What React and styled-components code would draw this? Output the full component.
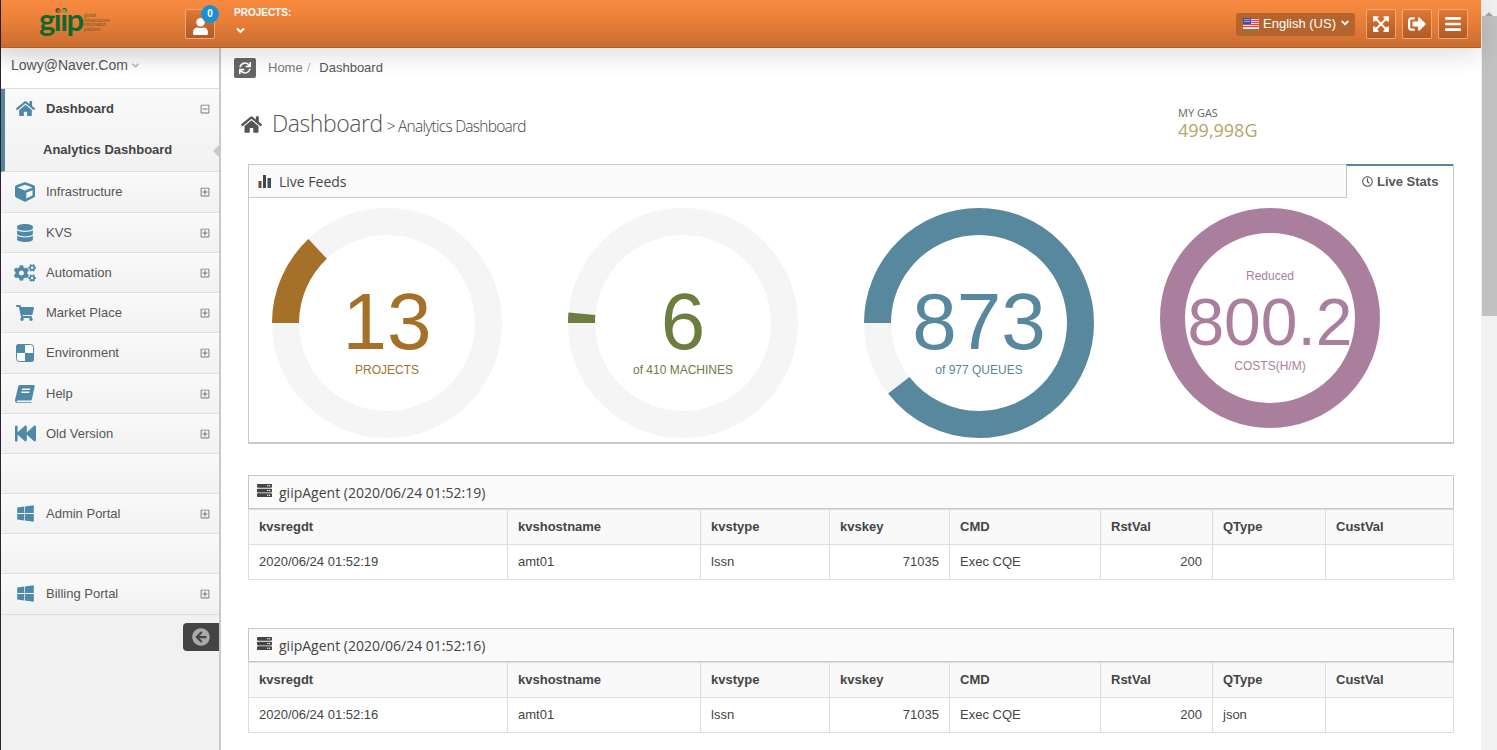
import React from 'react';
import styled, { createGlobalStyle } from 'styled-components';
import {
  FaHome, FaCube, FaDatabase, FaCogs, FaShoppingCart, FaFastBackward, FaWindows, FaUser,
  FaAngleDown, FaExpandArrowsAlt, FaSignOutAlt, FaBars, FaSync, FaRegClock, FaServer,
  FaArrowCircleLeft, FaRegPlusSquare, FaRegMinusSquare,
} from 'react-icons/fa';

const GlobalStyle = createGlobalStyle`
  html, body { margin: 0; padding: 0; height: 100%; overflow: hidden; background: #fff; }
  body { font-family: "Liberation Sans", Arial, sans-serif; font-size: 13px; color: #444; }
  * { box-sizing: border-box; }
`;

const Page = styled.div`
  display: flex;
  width: 1497px;
  height: 750px;
  overflow: hidden;
`;

const Viewport = styled.div`
  width: 1481px;
  display: flex;
  flex-direction: column;
  border-left: 1px solid #2e1f33;
  position: relative;
`;

// ---- scrollbar
const ScrollBar = styled.div`
  width: 16px;
  background: #f1f1f1;
  display: flex;
  flex-direction: column;
  align-items: center;
`;
const ScrollArrow = styled.div`
  margin-top: 6px;
  height: 10px;
  border-left: 4px solid transparent;
  border-right: 4px solid transparent;
  border-bottom: 4px solid #a3a3a3;
  width: 8px;
`;
const ScrollThumb = styled.div`
  width: 15px;
  margin-left: 1px;
  height: 300px;
  background: #c1c1c1;
`;

// ---- header
const Header = styled.header`
  height: 48px;
  flex: none;
  display: flex;
  align-items: flex-start;
  background: linear-gradient(to bottom, #f98b41 0%, #e97f39 45%, #c96c2f 100%);
  border-bottom: 1px solid #b45f28;
  box-shadow: 0 8px 24px rgba(0, 0, 0, 0.12);
  position: relative;
  z-index: 2;
`;
const Logo = styled.div`
  width: 184px;
  height: 47px;
  padding: 4px 0 0 38px;
  display: flex;
  gap: 1px;
  position: relative;
`;
const LogoMark = styled.span`
  font-family: "Lato", sans-serif;
  font-size: 31px;
  line-height: 31px;
  font-weight: 700;
  letter-spacing: -1.5px;
  color: #12672f;
`;
const LogoSub = styled.span`
  font-size: 4.5px;
  line-height: 4.5px;
  padding-top: 10px;
  width: 28px;
  color: #6b5a22;
`;
const LogoDot = styled.i`
  position: absolute;
  top: 9px;
  left: ${p => p.$x}px;
  width: 4px;
  height: 4px;
  border-radius: 50%;
  background: ${p => p.$c};
`;
const IconBox = styled.div`
  width: 30px;
  height: 30px;
  margin-top: 9px;
  border: 1px solid rgba(255, 190, 140, 0.75);
  border-radius: 2px;
  background: linear-gradient(to bottom, rgba(190, 95, 40, 0.35), rgba(165, 85, 35, 0.75));
  color: #fff;
  font-size: 18px;
  display: flex;
  align-items: center;
  justify-content: center;
  position: relative;
`;
const UserButton = styled(IconBox)`
  font-size: 17px;
  padding-top: 4px;
`;
const Badge = styled.span`
  position: absolute;
  top: -5px;
  right: -5px;
  width: 18px;
  height: 18px;
  border-radius: 50%;
  background: #1a8fd6;
  color: #fff;
  font-size: 10px;
  font-weight: 700;
  line-height: 18px;
  text-align: center;
`;
const Projects = styled.div`
  margin-left: 19px;
  padding-top: 7px;
  color: #fff;
  font-size: 10px;
  font-weight: 700;
  line-height: 11px;
  display: flex;
  flex-direction: column;
  gap: 6px;
  svg { font-size: 13px; }
`;
const HeaderRight = styled.div`
  margin-left: auto;
  padding-right: 13px;
  display: flex;
  align-items: flex-start;
  gap: 6px;
`;
const LangButton = styled.div`
  width: 119px;
  height: 23px;
  margin: 13px 5px 0 0;
  padding: 0 0 3px 7px;
  background: #b4652e;
  border-radius: 3px;
  color: #fff;
  font-size: 13px;
  display: flex;
  align-items: center;
  gap: 4px;
  white-space: nowrap;
  svg:last-child { font-size: 12px; margin-left: -1px; }
`;

// ---- body
const Body = styled.div`
  flex: 1;
  display: flex;
  min-height: 0;
`;
const Sidebar = styled.aside`
  width: 220px;
  flex: none;
  background: #f1f1f1;
  border-right: 2px solid #c9c9c9;
  display: flex;
  flex-direction: column;
`;
const UserRow = styled.div`
  height: 41px;
  flex: none;
  padding: 8px 0 0 10px;
  font-size: 14px;
  line-height: 18px;
  color: #555;
  background: linear-gradient(to bottom, #f0f0f0, #fff 60%);
  border-bottom: 1px solid #dcdcdc;
  svg { color: #bbb; font-size: 11px; vertical-align: -1px; margin-left: 2px; }
`;
const NavGroup = styled.div`
  background: linear-gradient(to bottom, #fafafa, #f1f1f1);
  border-bottom: 1px solid #dedede;
  border-left: 4px solid ${p => (p.$open ? '#55869e' : 'transparent')};
  height: ${p => p.$h}px;
  flex: none;
  position: relative;
`;
const NavRow = styled.div`
  height: 39px;
  padding: 0 9px 0 7px;
  display: flex;
  align-items: center;
  font-weight: ${p => (p.$bold ? 700 : 400)};
  color: ${p => (p.$bold ? '#444' : '#555')};
`;
const NavIcon = styled.span`
  width: 26px;
  margin-right: 8px;
  flex: none;
  display: flex;
  justify-content: center;
  color: #4e8aa8;
  font-size: ${p => p.$size || 19}px;
`;
const NavLabel = styled.span`
  flex: 1;
`;
const NavToggle = styled.span`
  color: #777;
  font-size: 10px;
  display: flex;
`;
const SubItem = styled.div`
  padding: 0 0 0 38px;
  height: 43px;
  line-height: 43px;
  font-weight: 700;
  color: #444;
`;
const ActiveArrow = styled.i`
  position: absolute;
  right: -1px;
  top: 55px;
  border-top: 7px solid transparent;
  border-bottom: 7px solid transparent;
  border-right: 7px solid #c9c9c9;
`;
const CollapseWrap = styled.div`
  display: flex;
  justify-content: flex-end;
  padding-top: 8px;
`;
const CollapseButton = styled.div`
  width: 36px;
  height: 28px;
  background: #444;
  border-radius: 4px 0 0 4px;
  color: #aaa;
  font-size: 18px;
  display: flex;
  align-items: center;
  justify-content: center;
`;

// ---- main
const Main = styled.main`
  flex: 1;
  min-width: 0;
  padding: 0 27px;
`;
const Breadcrumb = styled.div`
  height: 38px;
  margin-left: -14px;
  display: flex;
  align-items: center;
  padding-top: 1px;
  color: #777;
`;
const RefreshIcon = styled.span`
  width: 22px;
  height: 20px;
  margin-right: 12px;
  background: #666;
  border-radius: 2px;
  color: #fff;
  font-size: 12px;
  display: flex;
  align-items: center;
  justify-content: center;
`;
const Crumb = styled.span`
  color: ${p => (p.$current ? '#555' : '#777')};
`;
const Sep = styled.span`
  color: #bbb;
  padding: 0 9px 0 4px;
`;
const TitleRow = styled.div`
  height: 78px;
  display: flex;
  align-items: flex-start;
`;
const Title = styled.h1`
  margin: 0 0 0 -7px;
  width: 937px;
  padding: 20px 0 0;
  display: flex;
  align-items: baseline;
  font-family: "Open Sans", sans-serif;
  font-size: 23px;
  font-weight: 300;
  line-height: 34px;
  color: #555;
  letter-spacing: -0.45px;
  svg { font-size: 21px; margin-right: 10px; color: #555; align-self: center; }
  small { font-size: 15.5px; font-weight: 300; margin-left: 4px; color: #444; letter-spacing: -0.75px; }
`;
const Gas = styled.div`
  padding-top: 20px;
  font-family: "Open Sans", sans-serif;
  font-size: 11px;
  line-height: 13px;
  color: #666;
  b { display: block; font-size: 18px; line-height: 23px; font-weight: 400; color: #b9a36c; }
`;
const Panel = styled.section`
  border: 1px solid #c8c8c8;
  border-bottom-width: 2px;
  background: #fff;
  height: 280px;
`;
const PanelHead = styled.div`
  height: 33px;
  display: flex;
  background: #fafafa;
`;
const HeadTitle = styled.div`
  flex: 1;
  display: flex;
  align-items: center;
  gap: 7px;
  padding-left: 9px;
  font-family: "Open Sans", sans-serif;
  font-size: 14px;
  color: #444;
  border-bottom: 1px solid #c8c8c8;
  svg { color: #444; }
`;
const Tab = styled.div`
  width: 107px;
  margin-top: -1px;
  height: 34px;
  padding: 0 0 2px 15px;
  background: #fff;
  border-top: 2px solid #55869e;
  border-left: 1px solid #c8c8c8;
  display: flex;
  align-items: center;
  gap: 4px;
  font-weight: 700;
  font-size: 13px;
  color: #555;
  svg { font-size: 11px; }
`;
const Knobs = styled.div`
  display: flex;
  gap: 66px;
  padding: 10px 0 0 23px;
`;
const Knob = styled.div`
  display: grid;
  width: ${p => p.$size}px;
  height: ${p => p.$size}px;
  color: ${p => p.$color};
  & > * { grid-area: 1 / 1; }
`;
const KnobText = styled.div`
  display: flex;
  flex-direction: column;
  align-items: center;
  justify-content: center;
  text-align: center;
  padding-top: ${p => p.$pad || 0}px;
`;
const KnobValue = styled.div`
  font-size: ${p => p.$fs || 80}px;
  line-height: ${p => p.$lh || 76}px;
  margin-top: ${p => p.$mt || 0}px;
`;
const KnobLabel = styled.div`
  font-size: 12px;
  line-height: 14px;
  margin-top: ${p => p.$mt || 0}px;
`;
const Agent = styled.section`
  margin-top: ${p => p.$mt}px;
`;
const AgentHead = styled.div`
  height: 35px;
  display: flex;
  align-items: center;
  gap: 7px;
  padding-left: 8px;
  background: #fafafa;
  border: 1px solid #c8c8c8;
  border-bottom-width: 2px;
  font-family: "Open Sans", sans-serif;
  font-size: 14px;
  color: #444;
  svg { font-size: 15px; margin-bottom: 3px; }
`;
const Table = styled.table`
  width: 100%;
  border-collapse: collapse;
  table-layout: fixed;
  margin-top: -1px;
  font-size: 13px;
  color: #444;
`;
const Th = styled.th`
  height: 35px;
  padding: 0 10px 2px;
  background: #f9f9f9;
  border: 1px solid #dddddd;
  text-align: left;
  font-weight: 700;
  color: #444;
`;
const Td = styled.td`
  height: 35px;
  padding: 0 10px 2px;
  border: 1px solid #dddddd;
  text-align: ${p => (p.$right ? 'right' : 'left')};
`;

function Flag() {
  const stripes = [0, 2, 4, 6, 8];
  return (
    <svg width="16" height="11" viewBox="0 0 16 11" style={{ flex: 'none' }}>
      <rect width="16" height="11" fill="#fff" />
      {stripes.map(y => <rect key={y} y={y} width="16" height="1.2" fill="#e0434b" />)}
      <rect width="8" height="6" fill="#3c4fa3" />
      <rect x="1" y="1" width="6" height="0.6" fill="#dfe3f5" />
      <rect x="1" y="3" width="6" height="0.6" fill="#dfe3f5" />
    </svg>
  );
}

function BarsIcon() {
  return (
    <svg width="14" height="14" viewBox="0 0 14 14">
      <rect x="0.5" y="7" width="3" height="7" fill="#6b4a35" />
      <rect x="5" y="1" width="3" height="13" fill="#444" />
      <rect x="9.5" y="4" width="3.5" height="10" fill="#3d4f5e" />
    </svg>
  );
}

function BookIcon() {
  return (
    <svg width="20" height="18" viewBox="0 0 20 18">
      <path fill="currentColor" d="M5 0h13.5c.9 0 1.4.6 1.2 1.5L17 14c-.2.9-.9 1.4-1.8 1.4H3c-.9 0-1.3.6-1.2 1 .1.5.5.9 1.2.9h13.5v.7H2.5C1 18 0 17 0 15.5c0-.4.1-.8.2-1.2L3.2 1.6C3.5.6 4 0 5 0zm2 3.5v1.5h8V3.5zM6.3 6.5V8h8V6.5z" />
    </svg>
  );
}

function CheckerIcon() {
  return (
    <svg width="18" height="18" viewBox="0 0 18 18">
      <rect x="0.5" y="0.5" width="17" height="17" rx="3" fill="#fff" stroke="#4e8aa8" />
      <path fill="#4e8aa8" d="M3 0h6v9H0V3a3 3 0 0 1 3-3zM9 9h9v6a3 3 0 0 1-3 3H9z" />
    </svg>
  );
}

const navItems = [
  { label: 'Infrastructure', icon: <FaCube />, size: 20, h: 41 },
  { label: 'KVS', icon: <FaDatabase />, size: 18, h: 40 },
  { label: 'Automation', icon: <FaCogs />, size: 22, h: 40 },
  { label: 'Market Place', icon: <FaShoppingCart />, size: 18, h: 40 },
  { label: 'Environment', icon: <CheckerIcon />, h: 41 },
  { label: 'Help', icon: <BookIcon />, h: 40 },
  { label: 'Old Version', icon: <FaFastBackward />, size: 21, h: 40 },
  { h: 40 },
  { label: 'Admin Portal', icon: <FaWindows />, size: 19, h: 40 },
  { h: 40 },
  { label: 'Billing Portal', icon: <FaWindows />, size: 19, h: 41 },
];

const columns = [
  ['kvsregdt', 259], ['kvshostname', 193], ['kvstype', 129], ['kvskey', 120],
  ['CMD', 151], ['RstVal', 112], ['QType', 113], ['CustVal', 128],
];

function Donut({ size, percent, color, ring }) {
  const c = size / 2;
  const r = c - ring / 2;
  const len = 2 * Math.PI * r;
  return (
    <svg width={size} height={size} viewBox={`0 0 ${size} ${size}`}>
      <circle cx={c} cy={c} r={r} fill="none" stroke="#f5f5f5" strokeWidth={ring} />
      <circle
        cx={c}
        cy={c}
        r={r}
        fill="none"
        stroke={color}
        strokeWidth={ring}
        strokeDasharray={`${len * percent} ${len}`}
        transform={`rotate(180 ${c} ${c})`}
      />
    </svg>
  );
}

function AgentTable({ stamp, qtype, mt }) {
  return (
    <Agent $mt={mt}>
      <AgentHead><FaServer />giipAgent ({stamp})</AgentHead>
      <Table>
        <colgroup>
          {columns.map(([name, w]) => <col key={name} style={{ width: w }} />)}
        </colgroup>
        <thead>
          <tr>{columns.map(([name]) => <Th key={name}>{name}</Th>)}</tr>
        </thead>
        <tbody>
          <tr>
            <Td>{stamp}</Td>
            <Td>amt01</Td>
            <Td>lssn</Td>
            <Td $right>71035</Td>
            <Td>Exec CQE</Td>
            <Td $right>200</Td>
            <Td>{qtype}</Td>
            <Td />
          </tr>
        </tbody>
      </Table>
    </Agent>
  );
}

export default function App() {
  return (
    <Page>
      <GlobalStyle />
      <Viewport>
        <Header>
          <Logo>
            <LogoMark>giip</LogoMark>
            <LogoSub>global infrastructure information platform</LogoSub>
            <LogoDot $x={56} $c="#d9483b" />
            <LogoDot $x={61} $c="#7fb03c" />
          </Logo>
          <UserButton>
            <FaUser />
            <Badge>0</Badge>
          </UserButton>
          <Projects>
            PROJECTS:
            <FaAngleDown />
          </Projects>
          <HeaderRight>
            <LangButton><Flag />English (US)<FaAngleDown /></LangButton>
            <IconBox><FaExpandArrowsAlt /></IconBox>
            <IconBox><FaSignOutAlt /></IconBox>
            <IconBox><FaBars /></IconBox>
          </HeaderRight>
        </Header>
        <Body>
          <Sidebar>
            <UserRow>Lowy@Naver.Com<FaAngleDown /></UserRow>
            <NavGroup $open $h={83}>
              <NavRow $bold>
                <NavIcon><FaHome /></NavIcon>
                <NavLabel>Dashboard</NavLabel>
                <NavToggle><FaRegMinusSquare /></NavToggle>
              </NavRow>
              <SubItem>Analytics Dashboard</SubItem>
              <ActiveArrow />
            </NavGroup>
            {navItems.map((item, i) => (
              <NavGroup key={i} $h={item.h}>
                {item.label && (
                  <NavRow>
                    <NavIcon $size={item.size}>{item.icon}</NavIcon>
                    <NavLabel>{item.label}</NavLabel>
                    <NavToggle><FaRegPlusSquare /></NavToggle>
                  </NavRow>
                )}
              </NavGroup>
            ))}
            <CollapseWrap>
              <CollapseButton><FaArrowCircleLeft /></CollapseButton>
            </CollapseWrap>
          </Sidebar>
          <Main>
            <Breadcrumb>
              <RefreshIcon><FaSync /></RefreshIcon>
              <Crumb>Home</Crumb>
              <Sep>/</Sep>
              <Crumb $current>Dashboard</Crumb>
            </Breadcrumb>
            <TitleRow>
              <Title><FaHome />Dashboard <small>&gt; Analytics Dashboard</small></Title>
              <Gas>MY GAS<b>499,998G</b></Gas>
            </TitleRow>
            <Panel>
              <PanelHead>
                <HeadTitle><BarsIcon />Live Feeds</HeadTitle>
                <Tab><FaRegClock />Live Stats</Tab>
              </PanelHead>
              <Knobs>
                <Knob $size={230} $color="#a57028">
                  <Donut size={230} percent={13 / 100} color="#a57028" ring={27} />
                  <KnobText $pad={15}>
                    <KnobValue>13</KnobValue>
                    <KnobLabel $mt={3}>PROJECTS</KnobLabel>
                  </KnobText>
                </Knob>
                <Knob $size={230} $color="#6b7d3f">
                  <Donut size={230} percent={6 / 410} color="#6b7d3f" ring={27} />
                  <KnobText $pad={15}>
                    <KnobValue>6</KnobValue>
                    <KnobLabel $mt={3}>of 410 MACHINES</KnobLabel>
                  </KnobText>
                </Knob>
                <Knob $size={230} $color="#58889d">
                  <Donut size={230} percent={873 / 977} color="#58889d" ring={27} />
                  <KnobText $pad={15}>
                    <KnobValue>873</KnobValue>
                    <KnobLabel $mt={3}>of 977 QUEUES</KnobLabel>
                  </KnobText>
                </Knob>
                <Knob $size={220} $color="#a97f9d">
                  <Donut size={220} percent={1} color="#a97f9d" ring={25} />
                  <KnobText $pad={6}>
                    <KnobLabel>Reduced</KnobLabel>
                    <KnobValue $fs={66} $lh={66} $mt={6}>800.2</KnobValue>
                    <KnobLabel $mt={4}>COSTS(H/M)</KnobLabel>
                  </KnobText>
                </Knob>
              </Knobs>
            </Panel>
            <AgentTable stamp="2020/06/24 01:52:19" qtype="" mt={31} />
            <AgentTable stamp="2020/06/24 01:52:16" qtype="json" mt={48} />
          </Main>
        </Body>
      </Viewport>
      <ScrollBar>
        <ScrollArrow />
        <ScrollThumb />
      </ScrollBar>
    </Page>
  );
}
